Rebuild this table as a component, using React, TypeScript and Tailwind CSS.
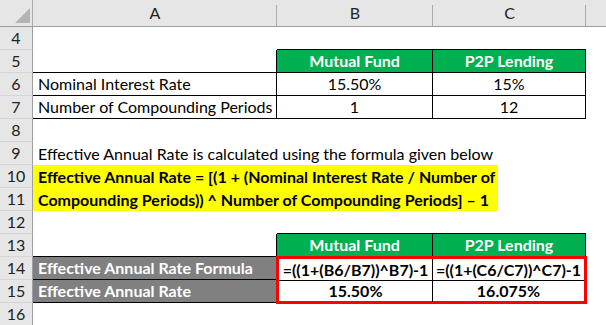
const cols = 'grid-cols-[33px_244px_156px_153px_20px]';

function RowNum({ n }: { n: number }) {
  return (
    <div className="h-[23px] bg-[#e6e6e6] border-r border-r-[#9e9e9e] border-b border-b-[#d4d4d4] flex items-end justify-center pb-[2px] text-[16px] leading-[19px] text-[#222]">
      {n}
    </div>
  );
}

function ColHead({ label, last }: { label: string; last?: boolean }) {
  return (
    <div className="relative h-full flex items-center justify-center text-[16px] text-[#222]">
      {label}
      {!last && <div className="absolute right-0 top-[5px] bottom-0 w-px bg-[#ababab]" />}
    </div>
  );
}

export default function App() {
  const cell = 'h-[23px] flex items-end pb-[2px] leading-[19px] whitespace-nowrap';
  const black = 'border-black';
  return (
    <div className="w-[606px] h-[325px] overflow-hidden bg-white font-['Lato',sans-serif] text-[16px] text-black">
      {/* column header */}
      <div className={`grid ${cols} h-[27px] bg-[#e6e6e6] border-b border-[#9e9e9e]`}>
        <div className="relative border-r border-[#ababab]">
          <svg className="absolute left-[15px] top-[8px]" width="15" height="15" viewBox="0 0 15 15">
            <polygon points="15,0 15,15 0,15" fill="#b4b4b4" />
          </svg>
        </div>
        <ColHead label="A" />
        <ColHead label="B" />
        <ColHead label="C" />
        <ColHead label="" last />
      </div>

      <div className={`grid ${cols} auto-rows-[23px]`}>
        {/* row 4 */}
        <RowNum n={4} />
        <div className={cell} />
        <div className={`${cell} border-b ${black}`} />
        <div className={`${cell} border-b ${black}`} />
        <div className={cell} />

        {/* row 5 */}
        <RowNum n={5} />
        <div className={`${cell} border-b border-r ${black}`} />
        <div className={`${cell} justify-center bg-[#00b050] text-white font-bold border-b border-r ${black}`}>Mutual Fund</div>
        <div className={`${cell} justify-center bg-[#00b050] text-white font-bold border-b border-r ${black}`}>P2P Lending</div>
        <div className={cell} />

        {/* row 6 */}
        <RowNum n={6} />
        <div className={`${cell} pl-[5px] border-b border-r ${black}`}>Nominal Interest Rate</div>
        <div className={`${cell} justify-center border-b border-r ${black}`}>15.50%</div>
        <div className={`${cell} justify-center border-b border-r ${black}`}>15%</div>
        <div className={cell} />

        {/* row 7 */}
        <RowNum n={7} />
        <div className={`${cell} pl-[5px] border-b border-r ${black}`}>Number of Compounding Periods</div>
        <div className={`${cell} justify-center border-b border-r ${black}`}>1</div>
        <div className={`${cell} justify-center border-b border-r ${black}`}>12</div>
        <div className={cell} />

        {/* row 8 */}
        <RowNum n={8} />
        <div className="col-span-4" />

        {/* row 9 */}
        <RowNum n={9} />
        <div className={`${cell} col-span-4 pl-[5px]`}>Effective Annual Rate is calculated using the formula given below</div>

        {/* rows 10-11 */}
        <RowNum n={10} />
        <div className="col-span-4 row-span-2">
          <div className="w-[465px] h-[46px] bg-[#ffff00] font-bold">
            <div className={`${cell} pl-[5px]`}>Effective Annual Rate = [(1 + (Nominal Interest Rate / Number of</div>
            <div className={`${cell} pl-[5px]`}>Compounding Periods)) ^ Number of Compounding Periods] – 1</div>
          </div>
        </div>
        <RowNum n={11} />

        {/* row 12 */}
        <RowNum n={12} />
        <div className={cell} />
        <div className={`${cell} border-b ${black}`} />
        <div className={`${cell} border-b ${black}`} />
        <div className={cell} />

        {/* row 13 */}
        <RowNum n={13} />
        <div className={`${cell} border-b border-r ${black}`} />
        <div className={`${cell} justify-center bg-[#00b050] text-white font-bold border-b border-r ${black}`}>Mutual Fund</div>
        <div className={`${cell} justify-center bg-[#00b050] text-white font-bold border-b border-r ${black}`}>P2P Lending</div>
        <div className={cell} />

        {/* rows 14-15 */}
        <RowNum n={14} />
        <div className={`${cell} pl-[5px] bg-[#808080] text-white font-bold border-b border-r ${black}`}>Effective Annual Rate Formula</div>
        <div className="col-span-2 row-span-2 -m-px z-10 border-[3px] border-[#ff0000] grid grid-cols-[154px_1fr] grid-rows-[22px_1fr] font-bold">
          <div className="flex items-end justify-center pb-px leading-[19px] border-b border-r border-black whitespace-nowrap">=((1+(B6/B7))^B7)-1</div>
          <div className="flex items-end justify-center pb-px leading-[19px] border-b border-black whitespace-nowrap">=((1+(C6/C7))^C7)-1</div>
          <div className="flex items-end justify-center pb-[2px] leading-[19px] border-r border-black">15.50%</div>
          <div className="flex items-end justify-center pb-[2px] leading-[19px]">16.075%</div>
        </div>
        <div className={cell} />

        <RowNum n={15} />
        <div className={`${cell} pl-[5px] bg-[#808080] text-white font-bold border-b border-r ${black}`}>Effective Annual Rate</div>
        <div className={cell} />

        {/* row 16 */}
        <RowNum n={16} />
        <div className="col-span-4" />
      </div>
    </div>
  );
}
